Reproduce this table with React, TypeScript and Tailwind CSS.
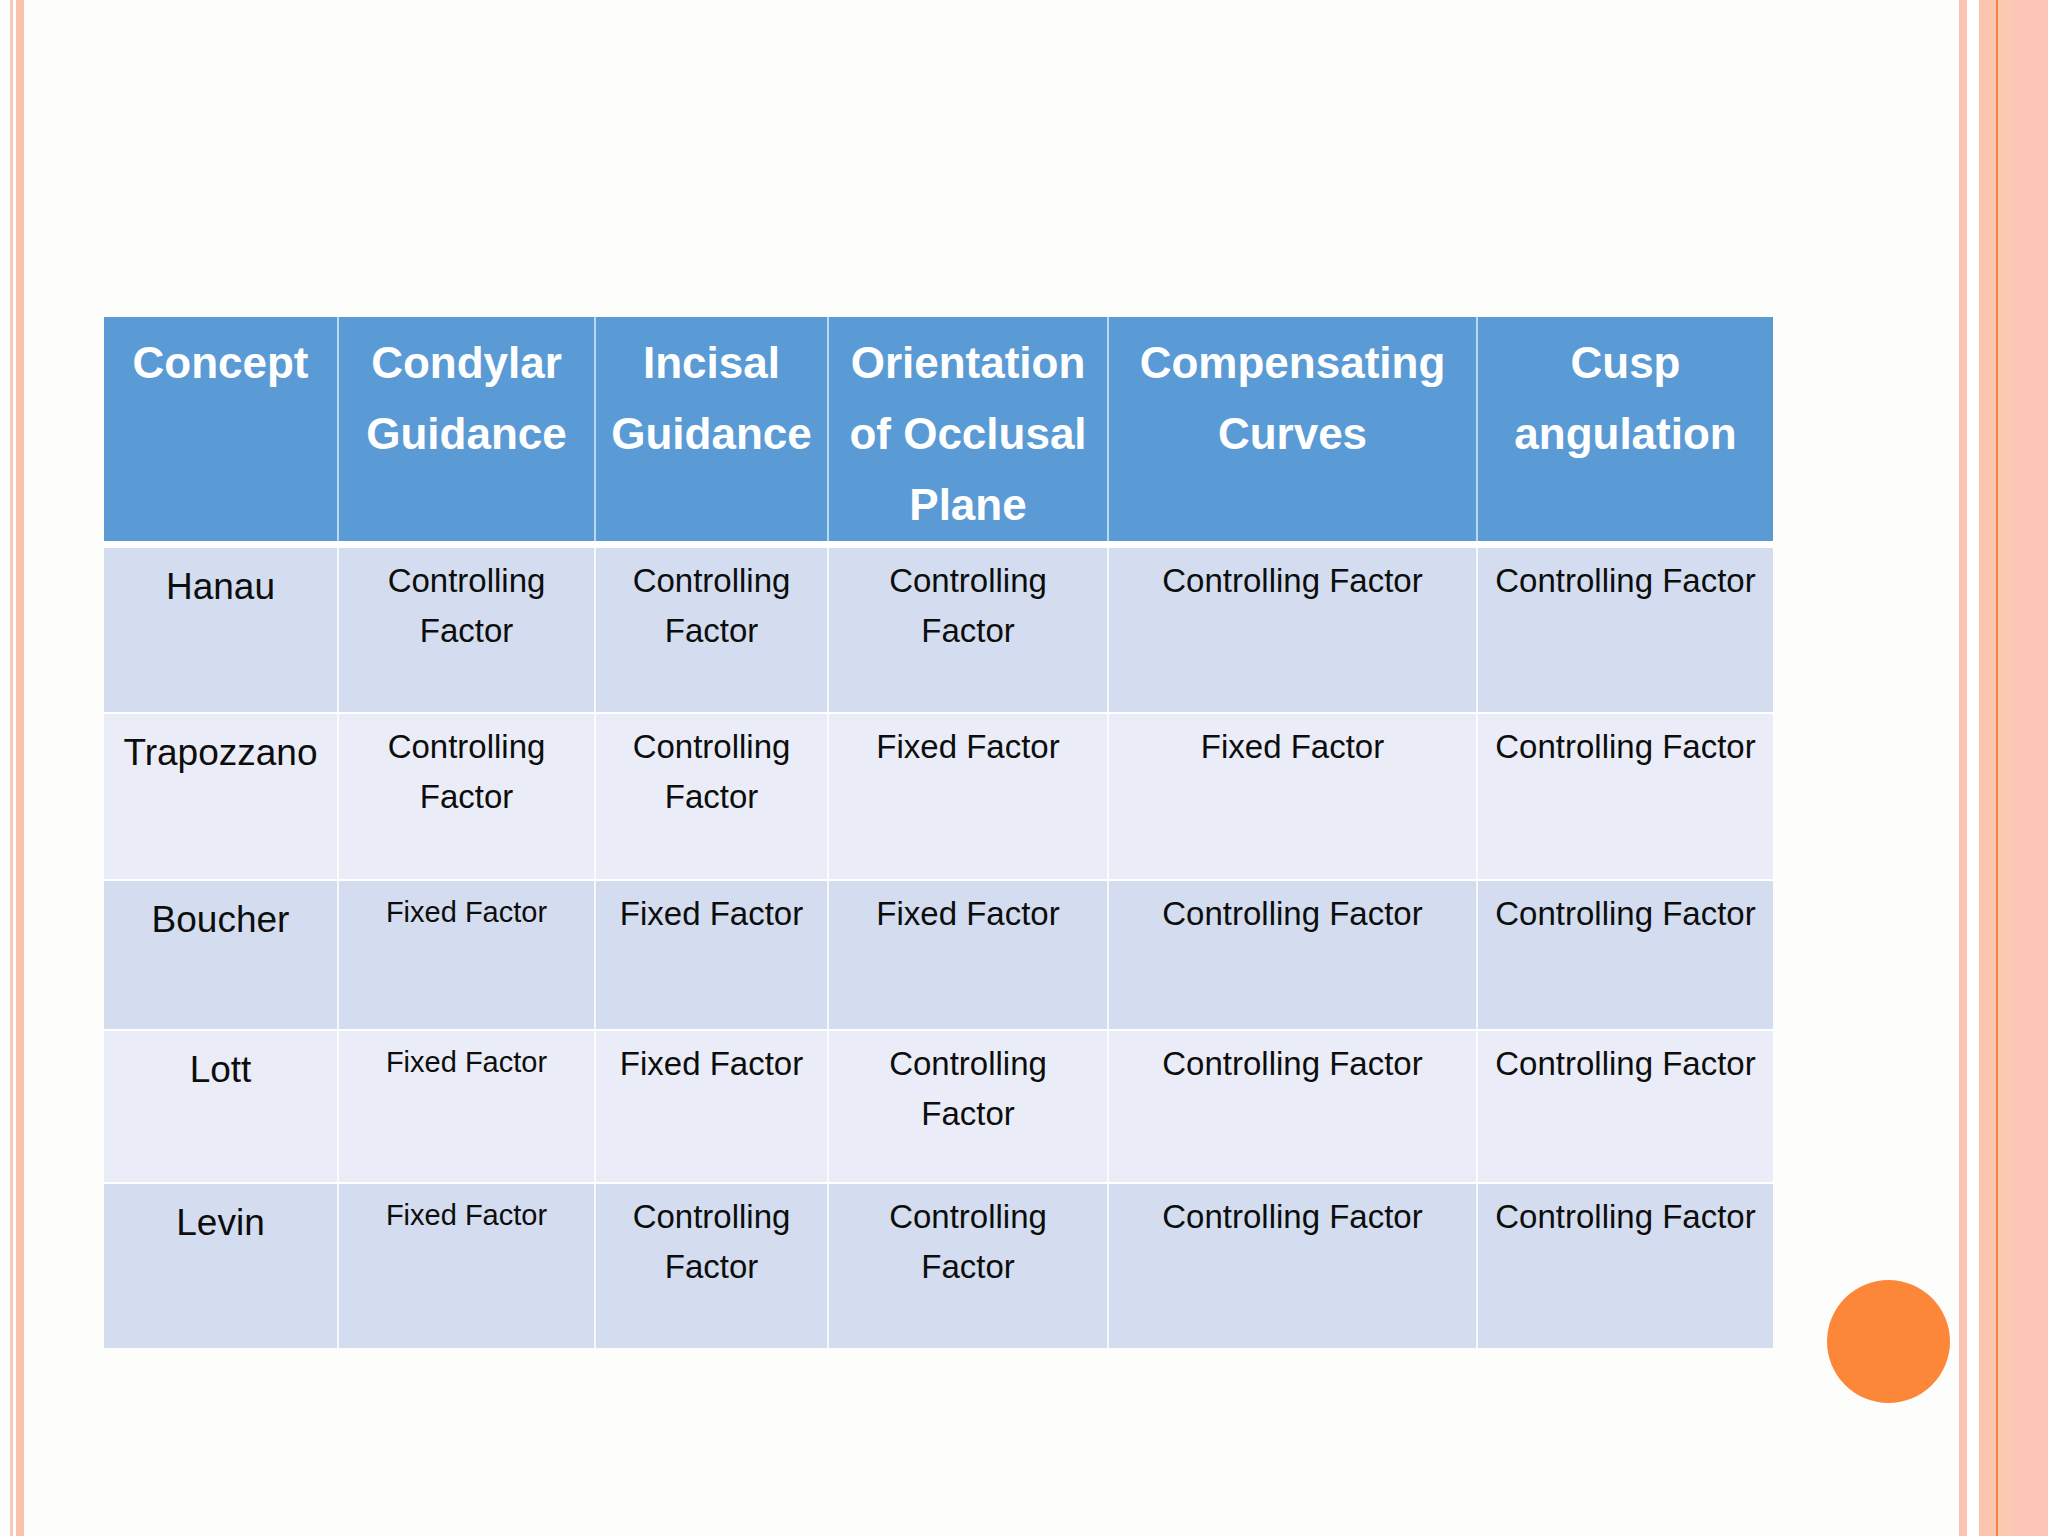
type Cell = { lines: string[]; small?: boolean };

const CF2: Cell = { lines: ["Controlling", "Factor"] };
const CF1: Cell = { lines: ["Controlling Factor"] };
const FF: Cell = { lines: ["Fixed Factor"] };
const FFs: Cell = { lines: ["Fixed Factor"], small: true };

const header: string[][] = [
  ["Concept"],
  ["Condylar", "Guidance"],
  ["Incisal", "Guidance"],
  ["Orientation", "of Occlusal", "Plane"],
  ["Compensating", "Curves"],
  ["Cusp", "angulation"],
];

const rows: { name: string; cells: Cell[]; cls: string }[] = [
  { name: "Hanau", cells: [CF2, CF2, CF2, CF1, CF1], cls: "h-[164px] bg-[#d3ddef]" },
  { name: "Trapozzano", cells: [CF2, CF2, FF, FF, CF1], cls: "h-[167px] border-t-2 border-white bg-[#eaedf7]" },
  { name: "Boucher", cells: [FFs, FF, FF, CF1, CF1], cls: "h-[150px] border-t-2 border-white bg-[#d3ddef]" },
  { name: "Lott", cells: [FFs, FF, CF2, CF1, CF1], cls: "h-[153px] border-t-2 border-white bg-[#eaedf7]" },
  { name: "Levin", cells: [FFs, CF2, CF2, CF1, CF1], cls: "h-[166px] border-t-2 border-white bg-[#d3ddef]" },
];

const grid = "grid grid-cols-[233px_257px_233px_280px_369px_297px]";

function BodyCell({ cell }: { cell: Cell }) {
  return (
    <div
      className={`flex flex-col items-center whitespace-nowrap leading-[50px] border-l-2 border-white/80 ${
        cell.small ? "pt-[6px] text-[29px]" : "pt-[8px] text-[33px]"
      }`}
    >
      {cell.lines.map((l) => (
        <span key={l}>{l}</span>
      ))}
    </div>
  );
}

export default function App() {
  return (
    <div className="flex h-[1536px] w-[2048px] overflow-hidden bg-[#fdfdfb] font-['Liberation_Sans',Arial,sans-serif] text-[#0d0d0d]">
      {/* left frame stripes */}
      <div className="w-[10px]" />
      <div className="w-[3px] bg-[#f7c9b9]" />
      <div className="w-[3px] bg-white" />
      <div className="w-[8px] bg-[#fbc2ab]" />

      <main className="flex flex-1 items-start">
        <div className="ml-[80px] mt-[317px] w-[1669px]">
          <div className={`${grid} h-[231px] border-b-[7px] border-white bg-[#5b9bd5] text-white`}>
            {header.map((lines, i) => (
              <div
                key={i}
                className={`flex flex-col items-center whitespace-nowrap pt-[10px] text-[44px] font-bold leading-[71px] ${
                  i === 0 ? "" : "border-l-2 border-white/60"
                }`}
              >
                {lines.map((l) => (
                  <span key={l}>{l}</span>
                ))}
              </div>
            ))}
          </div>

          {rows.map((r) => (
            <div key={r.name} className={`${grid} ${r.cls}`}>
              <div className="flex flex-col items-center whitespace-nowrap pt-[14px] text-[37px] leading-[50px]">
                <span>{r.name}</span>
              </div>
              {r.cells.map((c, i) => (
                <BodyCell key={i} cell={c} />
              ))}
            </div>
          ))}
        </div>

        <div className="ml-[54px] mt-[1280px] h-[123px] w-[123px] rounded-full bg-[#fc8739]" />
      </main>

      {/* right frame stripes */}
      <div className="w-[8px] bg-[#fbc3b1]" />
      <div className="w-[12px] bg-white" />
      <div className="w-[17px] bg-[#fcc3ae]" />
      <div className="w-[2px] bg-[#f3813f]" />
      <div className="w-[14px] bg-[#fcc9b3]" />
      <div className="w-[36px] bg-[#fcc5b5]" />
    </div>
  );
}
